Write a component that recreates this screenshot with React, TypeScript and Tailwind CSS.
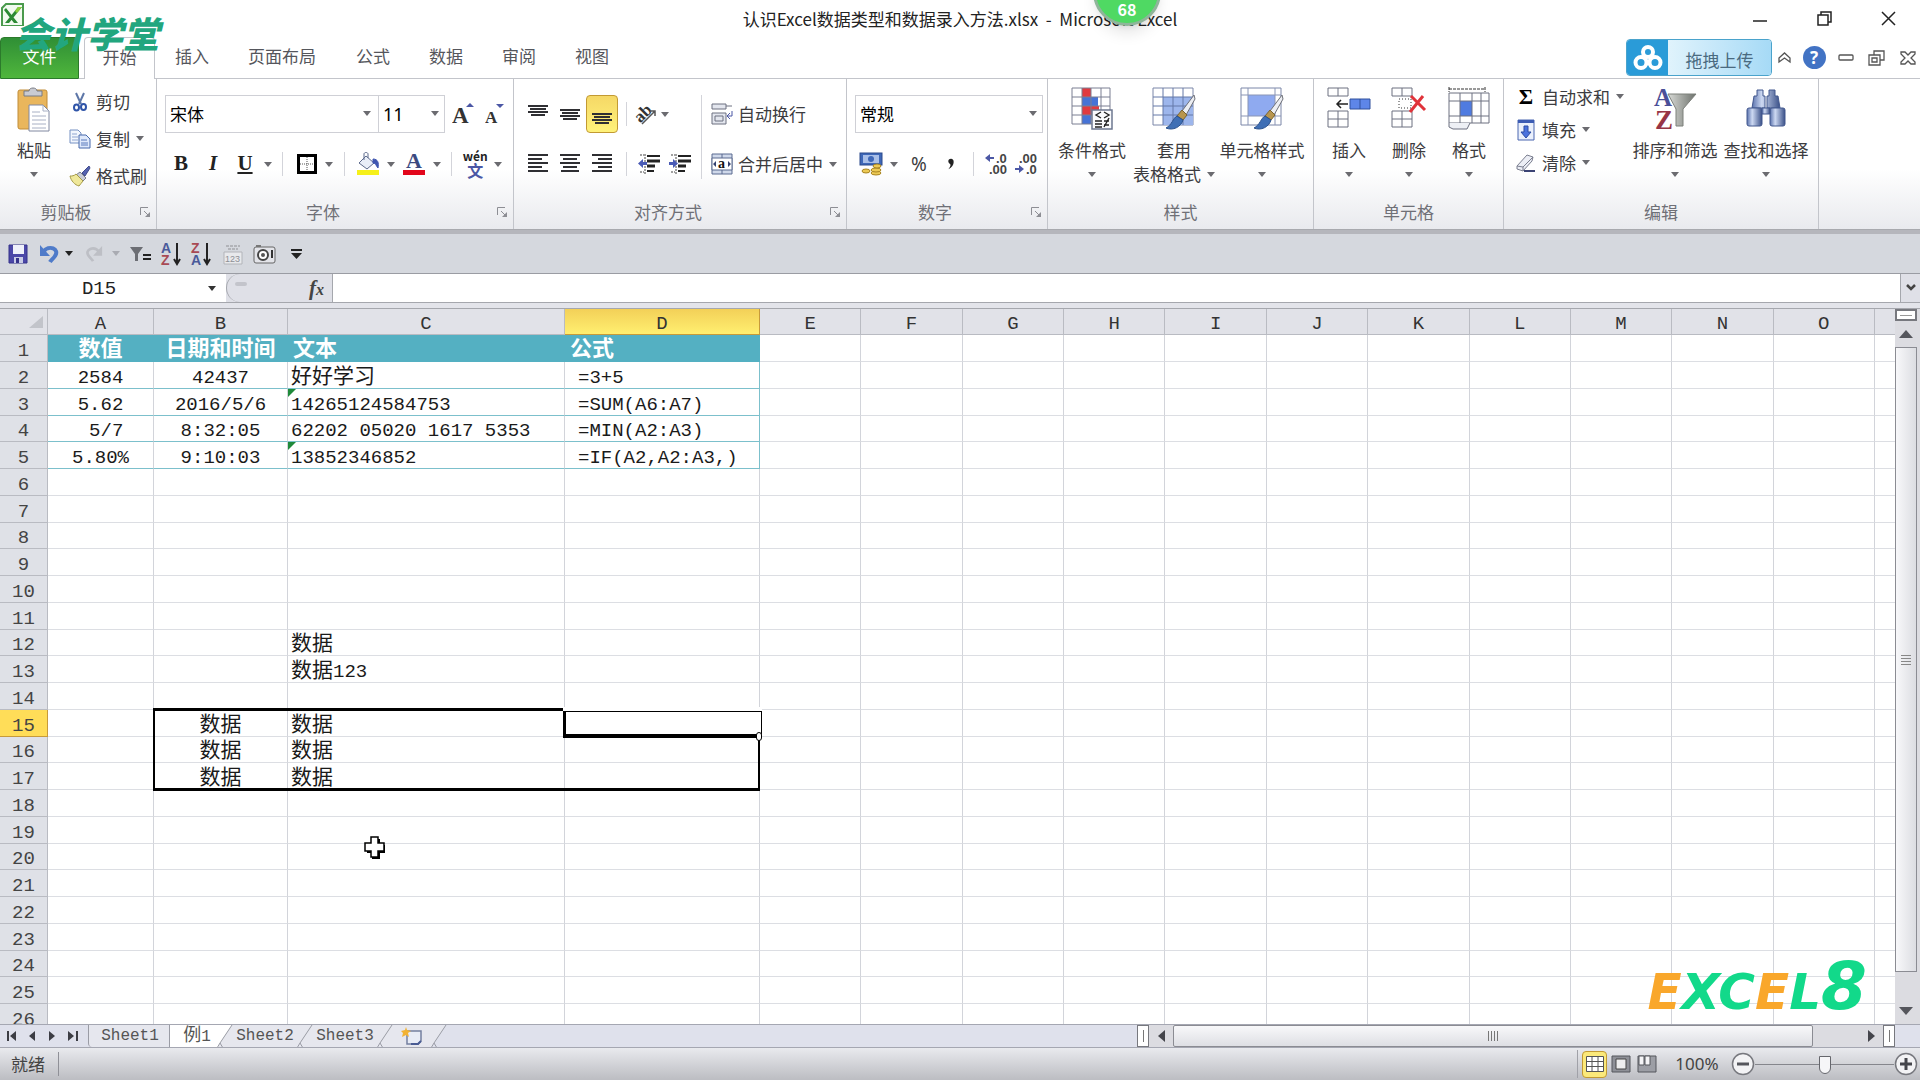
import React from "react";

const MONO = "font-['Liberation_Mono','Noto_Sans_CJK_SC',monospace]";

function Caret({ className = "text-[#6b6b70]" }: { className?: string }) {
  return (
    <svg width="8" height="5" viewBox="0 0 8 5" className={`shrink-0 ${className}`} aria-hidden="true">
      <path d="M0 0h8L4 5z" fill="currentColor" />
    </svg>
  );
}

function CaretBtn({ label }: { label: string }) {
  return (
    <button aria-label={label} className="flex h-full w-[14px] items-center justify-center">
      <Caret />
    </button>
  );
}

function Sep() {
  return (
    <span className="flex h-6 w-4 justify-center">
      <span className="h-full w-px bg-[#d3d4da]" />
    </span>
  );
}

function IconBtn({ label, className = "w-8", children }: { label: string; className?: string; children: React.ReactNode }) {
  return (
    <button aria-label={label} title={label} className={`flex h-full shrink-0 items-center justify-center ${className}`}>
      {children}
    </button>
  );
}

function RowBtn({ icon, text, caret, className }: { icon: React.ReactNode; text: string; caret?: boolean; className: string }) {
  return (
    <button className={`flex items-center whitespace-nowrap ${className}`}>
      <span className="flex w-6 shrink-0 justify-center">{icon}</span>
      <span>{text}</span>
      {caret && <Caret className="ml-0.5 text-[#6b6b70]" />}
    </button>
  );
}

function BigBtn({ icon, text, line2, className }: { icon: React.ReactNode; text: string; line2?: string; className: string }) {
  return (
    <button className={`flex shrink-0 flex-col items-center whitespace-nowrap pt-2 leading-6 ${className}`}>
      <span className="flex h-11 items-center">{icon}</span>
      <span className="mt-[7px]">{text}</span>
      <span className="flex h-6 items-center gap-1.5">
        {line2 && <span>{line2}</span>}
        <Caret />
      </span>
    </button>
  );
}

function Group({ name, launcher, className, children }: { name: string; launcher?: boolean; className: string; children: React.ReactNode }) {
  return (
    <section aria-label={name} className={`flex shrink-0 flex-col border-r border-[#c3c5cb] ${className}`}>
      <div className="h-[119px]">{children}</div>
      <div className="flex h-7 items-center text-[#6f7077]">
        <span className="flex-1 text-center">{name}</span>
        {launcher && (
          <button aria-label={`${name}设置`} className="flex w-6 justify-end pr-[5px]">
            <svg width="11" height="11" viewBox="0 0 11 11" fill="none" stroke="#8d8e94">
              <path d="M.5 8V.5H8M4 4l4 4" />
              <path d="M10 5v5H5z" fill="#8d8e94" stroke="none" />
            </svg>
          </button>
        )}
      </div>
    </section>
  );
}

function Lines({ rows }: { rows: [number, number, number][] }) {
  return (
    <svg width="20" height="20" viewBox="0 0 20 20" aria-hidden="true">
      {rows.map(([x, y, w]) => (
        <rect key={y} x={x} y={y} width={w} height="2" fill="#2f2f33" />
      ))}
    </svg>
  );
}

function Indent({ right }: { right?: boolean }) {
  return (
    <svg width="22" height="20" viewBox="0 0 22 20" aria-hidden="true">
      <path d="M2 1h4M2 18h4M7 0v20" stroke="#444" strokeDasharray="2 1" />
      <path d="M9 2h13M9 17h7" stroke="#222" strokeWidth="2" />
      <path d="M9 7h13M9 12h8" stroke="#222" strokeWidth="3" />
      <path d={right ? "M0 8h4V5l5 4.500-5 4.500v-3H0z" : "M9 8H5V5L0 9.500 5 14v-3h4z"} fill="#4a5bb5" />
    </svg>
  );
}

function Grid({ brush }: { brush?: "full" | "cell" }) {
  return (
    <svg width="44" height="44" viewBox="0 0 44 44" aria-hidden="true">
      <path d="M1 1h40v37H1z" fill="#fff" stroke="#7a86a8" />
      {brush === "full" ? (
        <>
          <path d="M11 10h30v28H11z" fill="#9db6ec" />
          <path d="M11 1v37M21 1v37M31 1v37M1 10h40M1 19h40M1 28h40" stroke="#6478a8" />
        </>
      ) : (
        <>
          <path d="M8 8h27v21H8z" fill="#8faaf0" />
          <path d="M8 1v37M35 1v37M1 8h40M1 29h40" stroke="#8a95b5" />
        </>
      )}
      <path d="M42 8 30 24l4 4 9-16z" fill="#eceef3" stroke="#6e7078" />
      <path d="m30 23-5 6 6 4 4-5z" fill="#b8964e" stroke="#7a6430" />
      <path d="M25 29c-4 2-5 9-11 12 7 3 15-1 17-8z" fill="#3f6fb5" stroke="#29508c" />
    </svg>
  );
}

const CondIcon = (
  <svg width="44" height="44" viewBox="0 0 44 44" aria-hidden="true">
    <path d="M2 1h38v36H2z" fill="#fff" />
    <path d="M12 1h9v9h-9z" fill="#e03a40" />
    <path d="M12 10h16v9H12z" fill="#4673d6" />
    <path d="M12 19h17v9H12z" fill="#e03a40" />
    <path d="M12 28h9v9h-9z" fill="#4673d6" />
    <path d="M2 1h38v36H2zM12 1v36M21 1v36M31 1v36M2 10h38M2 19h38M2 28h38" fill="none" stroke="#7a7f92" />
    <path d="M22 23h20v19H22z" fill="#fafbfd" stroke="#6e7890" strokeWidth="1.500" />
    <path d="m31 25-5 3 5 3M25 34h7M25 37h7M25 40h7M34 25l5 3-5 3M34 34h5M34 38h5M39 31l-5 9" fill="none" stroke="#222" strokeWidth="1.400" />
  </svg>
);

const InsertIcon = (
  <svg width="44" height="44" viewBox="0 0 44 44" fill="none" stroke="#6d7080" aria-hidden="true">
    <path d="M1 1h20v8H1zM11 1v8M1 24h20v16H1zM11 24v16M1 32h20" fill="#fff" />
    <path d="M10 17h11M14 13l-4 4 4 4" stroke="#222" strokeWidth="1.500" />
    <path d="M23 12h20v10H23zM33 12v10" fill="#5e86e8" stroke="#31509c" />
  </svg>
);

const DeleteIcon = (
  <svg width="44" height="44" viewBox="0 0 44 44" fill="none" stroke="#6d7080" aria-hidden="true">
    <path d="M5 1h20v8H5zM15 1v8M5 24h20v16H5zM15 24v16M5 32h20" fill="#fff" />
    <path d="M12 12h12v9H12z" stroke="#333" strokeDasharray="1 2" />
    <path d="m24 9 14 14M36 9 23 25" stroke="#e0333a" strokeWidth="3" />
  </svg>
);

const FormatIcon = (
  <svg width="44" height="44" viewBox="0 0 44 44" fill="none" stroke="#6d7080" aria-hidden="true">
    <path d="M2 0v5M38 0v5M2 2h36" stroke="#333" strokeDasharray="3 1" />
    <path d="M2 6h40v30H2z" fill="#fff" />
    <path d="M13 14h12v15H13z" fill="#4f7be0" stroke="none" />
    <path d="M13 6v30M25 6v30M34 6v30M2 14h40M2 29h40" />
    <path d="M2 36v4l4 2h14l3-6" fill="#eef0f5" />
  </svg>
);

const SortIcon = (
  <svg width="44" height="44" viewBox="0 0 44 44" aria-hidden="true">
    <defs>
      <linearGradient id="fun" x1="0" x2="1">
        <stop offset="0" stopColor="#d8dad6" />
        <stop offset="1" stopColor="#6d716c" />
      </linearGradient>
    </defs>
    <path d="M15 7h28L30 22v17h-7V22z" fill="url(#fun)" stroke="#7d807b" />
    <text x="1" y="19" fontSize="25" fontWeight="700" fontFamily="Liberation Serif" fill="#4a4f98">A</text>
    <text x="2" y="42" fontSize="27" fontWeight="700" fontFamily="Liberation Serif" fill="#973546">Z</text>
  </svg>
);

const FindIcon = (
  <svg width="42" height="42" viewBox="0 0 42 42" aria-hidden="true">
    <defs>
      <linearGradient id="bino" x1="0" x2="1">
        <stop offset="0" stopColor="#5a72ad" />
        <stop offset=".35" stopColor="#cdd9f2" />
        <stop offset="1" stopColor="#3a5088" />
      </linearGradient>
    </defs>
    <g fill="url(#bino)" stroke="#43588e">
      <path d="M12 2h6v6h2v12H7l2-12h3zM24 2h6v6h3l2 12H22V8h2z" />
      <rect x="2" y="20" width="15" height="18" rx="2" />
      <rect x="25" y="20" width="15" height="18" rx="2" />
      <path d="M17 20h8v6h-8z" />
    </g>
  </svg>
);

const PasteIcon = (
  <svg width="36" height="46" viewBox="0 0 34 46" aria-hidden="true">
    <rect x="1" y="3" width="29" height="39" rx="2" fill="#e9b65c" stroke="#c08c38" />
    <path d="M7 7V4h5c0-4 8-4 8 0h5v5H7z" fill="#c9cbd2" stroke="#777a84" />
    <path d="M12 18h14l6 6v20H12z" fill="#fff" stroke="#8088a0" />
    <path d="M26 18v6h6M15 25h8M15 29h14M15 33h14M15 37h14M15 41h14" fill="none" stroke="#a8b0c4" />
  </svg>
);

const CutIcon = (
  <svg width="16" height="20" viewBox="0 0 16 20" fill="none" aria-hidden="true">
    <path d="m4 1 5 11M12 1 7 12" stroke="#5e77a8" strokeWidth="2" />
    <ellipse cx="4.500" cy="15.500" rx="2.500" ry="3" stroke="#2f54a8" strokeWidth="2" />
    <ellipse cx="11.500" cy="15" rx="2.500" ry="3" stroke="#2f54a8" strokeWidth="2" />
  </svg>
);

const CopyIcon = (
  <svg width="22" height="20" viewBox="0 0 22 20" aria-hidden="true">
    <path d="M1 1h8l3 3v10H1z" fill="#f2f6fd" stroke="#7590c2" />
    <path d="M3 5h5M3 8h6M3 11h6" stroke="#8fa5d0" />
    <path d="M10 6h7l4 4v9H10z" fill="#dfe9fb" stroke="#4668ab" />
    <path d="M12 11h6M12 14h7M12 16h7" stroke="#5a7abc" />
  </svg>
);

const BrushIcon = (
  <svg width="22" height="22" viewBox="0 0 22 22" aria-hidden="true">
    <path d="m20 1-7 7 3 3 5-8z" fill="#5563b0" stroke="#3f4a8c" />
    <path d="m11 7 6 6-3 3-7-6z" fill="#c9ccd6" stroke="#7a7e8c" />
    <path d="M7 9c-2 2-4 2-6 2 1 5 5 9 9 10 1-2 3-3 4-5z" fill="#efe89a" stroke="#a59a48" />
  </svg>
);

const FillIcon = (
  <svg width="18" height="22" viewBox="0 0 18 22" aria-hidden="true">
    <path d="M1 1h16v20H1z" fill="#eaf0fc" stroke="#4a67b0" />
    <path d="M1 1h16v3H1z" fill="#3c5cb4" />
    <path d="M7 7h4v6h3l-5 6-5-6h3z" fill="#4a72dd" stroke="#2b4ba4" />
  </svg>
);

const EraseIcon = (
  <svg width="20" height="18" viewBox="0 0 20 18" aria-hidden="true">
    <path d="M1 12 11 1l6 2-1 4-9 10-6-2z" fill="#eceef5" stroke="#7b7f90" />
    <path d="m1 12 6 1 10-10M7 13v4" fill="none" stroke="#7b7f90" />
    <path d="M8 17h11" stroke="#3b4374" strokeWidth="2" />
  </svg>
);

function SortLetters({ a, b, ca, cb }: { a: string; b: string; ca: string; cb: string }) {
  return (
    <svg width="22" height="24" viewBox="0 0 22 24" aria-hidden="true">
      <text x="1" y="11" fontSize="14" fontWeight="700" fontFamily="Liberation Sans" fill={ca}>{a}</text>
      <text x="1" y="23" fontSize="14" fontWeight="700" fontFamily="Liberation Sans" fill={cb}>{b}</text>
      <path d="M17 1v20M14 17l3 5 3-5" fill="none" stroke="#222" strokeWidth="2" />
    </svg>
  );
}

function Ribbon() {
  return (
    <div className="flex h-[151px] shrink-0 overflow-hidden border-b border-[#a8a9ae] bg-linear-to-b from-white from-60% to-[#e9eaee] text-[17px] text-[#3c3c40]">
      <Group name="剪贴板" launcher className="w-[157px]">
        <div className="flex">
          <button className="flex w-[68px] flex-col items-center pt-2 leading-6">
            <span className="h-11">{PasteIcon}</span>
            <span className="mt-[7px]">粘贴</span>
            <span className="flex h-6 items-center"><Caret /></span>
          </button>
          <div className="flex flex-col pt-1">
            <RowBtn className="h-[37px] gap-1" icon={CutIcon} text="剪切" />
            <RowBtn className="h-[37px] gap-1" icon={CopyIcon} text="复制" caret />
            <RowBtn className="h-[37px] gap-1" icon={BrushIcon} text="格式刷" />
          </div>
        </div>
      </Group>

      <Group name="字体" launcher className="w-[357px]">
        <div className="px-2 pt-4">
          <div className="flex h-[38px] items-center">
            <div className="relative h-full">
              <select aria-label="字体" className="h-full w-[214px] appearance-none border border-[#cfd0d6] bg-white pl-1 text-black">
                <option>宋体</option>
              </select>
              <Caret className="pointer-events-none absolute right-2 top-4 text-[#6b6b70]" />
            </div>
            <div className="relative h-full">
              <select aria-label="字号" className="h-full w-[66px] appearance-none border border-l-0 border-[#cfd0d6] bg-white pl-1 font-['Noto_Sans',sans-serif] text-[18px] text-black">
                <option>11</option>
              </select>
              <Caret className="pointer-events-none absolute right-1.5 top-4 text-[#6b6b70]" />
            </div>
            <IconBtn label="增大字号" className="w-9">
              <svg width="22" height="24" viewBox="0 0 22 24">
                <text x="0" y="21" fontSize="23" fontWeight="700" fontFamily="Liberation Serif" fill="#333">A</text>
                <path d="M14 5h8l-4-4z" fill="#4b57a5" />
              </svg>
            </IconBtn>
            <IconBtn label="减小字号" className="w-7">
              <svg width="20" height="24" viewBox="0 0 20 24">
                <text x="0" y="21" fontSize="17" fontWeight="700" fontFamily="Liberation Serif" fill="#333">A</text>
                <path d="M11 2h8l-4 4z" fill="#4b57a5" />
              </svg>
            </IconBtn>
          </div>
          <div className="mt-4 flex h-[30px] items-center font-['Liberation_Serif',serif] text-[21px] font-bold text-[#222]">
            <IconBtn label="加粗">B</IconBtn>
            <IconBtn label="倾斜"><i>I</i></IconBtn>
            <IconBtn label="下划线"><u>U</u></IconBtn>
            <CaretBtn label="下划线选项" />
            <Sep />
            <IconBtn label="边框">
              <svg width="20" height="20" viewBox="0 0 20 20" fill="none">
                <path d="M1.500 1.500h17v17h-17z" stroke="#000" strokeWidth="3" />
                <path d="M10 3v14M3 10h14" stroke="#555" strokeDasharray="1 1" />
              </svg>
            </IconBtn>
            <CaretBtn label="边框选项" />
            <Sep />
            <IconBtn label="填充颜色">
              <svg width="24" height="24" viewBox="0 0 24 24">
                <path d="m10 4 8 7-7 6-8-6z" fill="#e9eef8" stroke="#5d6a8c" />
                <path d="M8 8V2c0-2 4-2 4 0v4" fill="none" stroke="#5d6a8c" />
                <path d="M17 7c5 0 6 4 5 9-2-2-2-5-5-5z" fill="#4056b0" stroke="#4056b0" />
                <path d="M1 18h22v5H1z" fill="#f6f01a" />
              </svg>
            </IconBtn>
            <CaretBtn label="填充颜色选项" />
            <IconBtn label="字体颜色">
              <svg width="24" height="24" viewBox="0 0 24 24">
                <text x="4" y="16" fontSize="22" fontWeight="700" fontFamily="Liberation Serif" fill="#3b4a80">A</text>
                <path d="M1 18h22v5H1z" fill="#e2061b" />
              </svg>
            </IconBtn>
            <CaretBtn label="字体颜色选项" />
            <Sep />
            <IconBtn label="拼音">
              <span className="flex flex-col items-center font-['Noto_Sans_CJK_SC',sans-serif] leading-3">
                <span className="text-[12px]">wén</span>
                <span className="text-[16px] leading-4 text-[#4b57a5]">文</span>
              </span>
            </IconBtn>
            <CaretBtn label="拼音选项" />
          </div>
        </div>
      </Group>

      <Group name="对齐方式" launcher className="w-[333px]">
        <div className="flex pl-2 pt-4">
          <div className="w-[180px] border-r border-[#d3d4da]">
            <div className="flex h-[38px] items-center">
              <IconBtn label="顶端对齐"><Lines rows={[[0, 1, 20], [2, 4, 16], [0, 7, 20], [3, 10, 14]]} /></IconBtn>
              <IconBtn label="垂直居中"><Lines rows={[[0, 5, 20], [2, 8, 16], [0, 11, 20], [3, 14, 14]]} /></IconBtn>
              <IconBtn label="底端对齐" className="w-8 rounded-sm border border-[#c29a33] bg-linear-to-b from-[#f5d866] to-[#fff27a]">
                <Lines rows={[[0, 9, 20], [2, 12, 16], [0, 15, 20], [3, 18, 14]]} />
              </IconBtn>
              <Sep />
              <IconBtn label="方向" className="w-6">
                <svg width="24" height="24" viewBox="0 0 24 24">
                  <text x="1" y="17" fontSize="17" fontWeight="700" fontFamily="Liberation Serif" fill="#333" transform="rotate(-45 9 13)">ab</text>
                  <path d="M8 22 21 9M21 14V9h-5" fill="none" stroke="#555" strokeWidth="1.500" />
                </svg>
              </IconBtn>
              <CaretBtn label="方向选项" />
            </div>
            <div className="mt-4 flex h-[30px] items-center">
              <IconBtn label="左对齐"><Lines rows={[[0, 0, 20], [0, 4, 14], [0, 8, 20], [0, 12, 14], [0, 16, 20]]} /></IconBtn>
              <IconBtn label="居中"><Lines rows={[[0, 0, 20], [3, 4, 14], [0, 8, 20], [3, 12, 14], [1, 16, 18]]} /></IconBtn>
              <IconBtn label="右对齐"><Lines rows={[[0, 0, 20], [6, 4, 14], [0, 8, 20], [6, 12, 14], [0, 16, 20]]} /></IconBtn>
              <Sep />
              <IconBtn label="减少缩进量" className="w-[30px]"><Indent /></IconBtn>
              <IconBtn label="增加缩进量"><Indent right /></IconBtn>
            </div>
          </div>
          <div className="pl-2">
            <RowBtn
              className="h-[38px] gap-1"
              text="自动换行"
              icon={
                <svg width="22" height="22" viewBox="0 0 22 22" fill="none" stroke="#6c7080">
                  <path d="M1 1h14v5H1zM1 10h14v11H1z" fill="#e3e6ee" />
                  <path d="M15 3h6M4 13h8v5H4z" />
                  <path d="M21 8v5h-4M19 10l-3 3 3 3" stroke="#4b57a5" />
                </svg>
              }
            />
            <RowBtn
              className="mt-4 h-[30px] gap-1"
              text="合并后居中"
              caret
              icon={
                <svg width="22" height="22" viewBox="0 0 22 22">
                  <path d="M1 1h20v20H1z" fill="#cfd8ea" stroke="#5a6a90" />
                  <path d="M1 5h20v12H1z" fill="#fff" stroke="#5a6a90" />
                  <path d="M11 1v4M11 17v4" stroke="#5a6a90" />
                  <text x="7" y="15" fontSize="14" fontWeight="700" fontFamily="Liberation Serif" fill="#111">a</text>
                  <path d="M2 11l3-3v6zM20 11l-3-3v6z" fill="#33406e" />
                </svg>
              }
            />
          </div>
        </div>
      </Group>

      <Group name="数字" launcher className="w-[201px]">
        <div className="pl-2 pt-4">
          <div className="relative h-[38px] w-[188px]">
            <select aria-label="数字格式" className="h-full w-full appearance-none border border-[#cfd0d6] bg-white pl-1 text-black">
              <option>常规</option>
            </select>
            <Caret className="pointer-events-none absolute right-1.5 top-4 text-[#6b6b70]" />
          </div>
          <div className="mt-4 flex h-[30px] items-center">
            <IconBtn label="会计数字格式">
              <svg width="24" height="24" viewBox="0 0 24 24">
                <rect x="1" y="1" width="22" height="12" fill="#3f68b8" stroke="#2c4a8c" />
                <rect x="4" y="3" width="16" height="8" fill="#a9bfe8" />
                <circle cx="12" cy="7" r="3" fill="#3f68b8" />
                <g fill="#ecc955" stroke="#a88422">
                  <ellipse cx="17" cy="21" rx="5" ry="2" />
                  <ellipse cx="17" cy="18" rx="5" ry="2" />
                  <ellipse cx="18" cy="14" rx="4" ry="2" />
                  <ellipse cx="7" cy="19" rx="4" ry="2" />
                </g>
              </svg>
            </IconBtn>
            <CaretBtn label="会计格式选项" />
            <IconBtn label="百分比样式" className="w-9 font-['Noto_Sans',sans-serif] text-[19px]">%</IconBtn>
            <IconBtn label="千位分隔样式" className="w-7">
              <svg width="8" height="12" viewBox="0 0 8 14"><path d="M4 1c5 0 4 9-3 12 2-3 3-4 2-6C0 6 0 1 4 1z" fill="#222" /></svg>
            </IconBtn>
            <Sep />
            <IconBtn label="增加小数位数" className="w-[30px]">
              <svg width="24" height="24" viewBox="0 0 24 24" fontFamily="Liberation Sans" fontSize="13" fontWeight="700" fill="#444">
                <text x="12" y="11">.0</text><text x="5" y="22">.00</text>
                <path d="M10 5H6V2L1 6l5 4V7h4z" fill="#4b57a5" />
              </svg>
            </IconBtn>
            <IconBtn label="减少小数位数" className="w-[30px]">
              <svg width="24" height="24" viewBox="0 0 24 24" fontFamily="Liberation Sans" fontSize="13" fontWeight="700" fill="#444">
                <text x="5" y="11">.00</text><text x="12" y="22">.0</text>
                <path d="M1 16h4v-3l5 4-5 4v-3H1z" fill="#4b57a5" />
              </svg>
            </IconBtn>
          </div>
        </div>
      </Group>

      <Group name="样式" className="w-[266px]">
        <div className="flex">
          <BigBtn className="w-[88px]" icon={CondIcon} text="条件格式" />
          <BigBtn className="w-[76px]" icon={<Grid brush="full" />} text="套用" line2="表格格式" />
          <BigBtn className="w-[100px]" icon={<Grid brush="cell" />} text="单元格样式" />
        </div>
      </Group>

      <Group name="单元格" className="w-[190px]">
        <div className="flex pl-[5px]">
          <BigBtn className="w-[60px]" icon={InsertIcon} text="插入" />
          <BigBtn className="w-[60px]" icon={DeleteIcon} text="删除" />
          <BigBtn className="w-[60px]" icon={FormatIcon} text="格式" />
        </div>
      </Group>

      <Group name="编辑" className="w-[315px]">
        <div className="flex">
          <div className="flex w-[126px] flex-col pl-2.5 pt-px">
            <RowBtn className="h-[33px] gap-1" icon={<span className="font-['Liberation_Serif',serif] text-[22px] font-bold leading-6 text-black">Σ</span>} text="自动求和" caret />
            <RowBtn className="h-[33px] gap-1" icon={FillIcon} text="填充" caret />
            <RowBtn className="h-[33px] gap-1" icon={EraseIcon} text="清除" caret />
          </div>
          <BigBtn className="w-[90px]" icon={SortIcon} text="排序和筛选" />
          <BigBtn className="w-[92px]" icon={FindIcon} text="查找和选择" />
        </div>
      </Group>
    </div>
  );
}

function TitleBar() {
  return (
    <header className="grid h-[37px] shrink-0 grid-cols-[1fr_auto_1fr] items-center">
      <svg width="25" height="26" viewBox="0 0 25 26" className="self-start" aria-hidden="true">
        <path d="M2 8 6 4h17v22H2z" fill="#f2faf0" stroke="#4a9a4d" strokeWidth="2" />
        <path d="m6 8 12 15h-4L4 10zM18 7h4L9 23H5z" fill="#2c8a34" />
        <path d="M18 7h4l-5 6-2-2z" fill="#8ccf3e" />
      </svg>
      <h1 className="whitespace-pre text-[17px] text-[#222]">认识Excel数据类型和数据录入方法.xlsx  -  Microsoft Excel</h1>
      <div className="flex justify-end text-[#222]">
        <button aria-label="最小化" className="flex h-9 w-16 items-center justify-center">
          <svg width="14" height="14" viewBox="0 0 14 14"><path d="M0 9h14" stroke="currentColor" strokeWidth="1.500" /></svg>
        </button>
        <button aria-label="还原" className="flex h-9 w-16 items-center justify-center">
          <svg width="15" height="15" viewBox="0 0 15 15" fill="none" stroke="currentColor" strokeWidth="1.500"><path d="M1 4h10v10H1zM4 4V1h10v10h-3" /></svg>
        </button>
        <button aria-label="关闭" className="flex h-9 w-16 items-center justify-center">
          <svg width="15" height="15" viewBox="0 0 15 15" stroke="currentColor" strokeWidth="1.500"><path d="m1 1 13 13M14 1 1 14" /></svg>
        </button>
      </div>
    </header>
  );
}

function TabBar() {
  return (
    <nav className="flex h-[42px] shrink-0 items-end text-[17px] text-[#55565c]">
      <button className="h-full w-[79px] rounded-t-sm border border-[#2b7a2b] bg-linear-to-b from-[#2f8f35] to-[#4fb63c] pb-1 text-white">文件</button>
      <span className="h-full w-[5px] border-b border-[#c3c5cb]" />
      <button className="h-full w-[71px] rounded-t border border-b-0 border-[#c3c5cb] bg-white pb-1">开始</button>
      <div className="flex h-full flex-1 items-center border-b border-[#c3c5cb]">
        <div className="flex pb-[3px]">
          <button className="w-[74px]">插入</button>
          <button className="w-[106px]">页面布局</button>
          <button className="w-[76px]">公式</button>
          <button className="w-[70px]">数据</button>
          <button className="w-[76px]">审阅</button>
          <button className="w-[70px]">视图</button>
        </div>
        <div className="ml-auto flex h-full items-center">
          <button className="flex h-[37px] w-[146px] overflow-hidden rounded border border-[#4aa3cc]">
            <span className="flex h-full w-[41px] items-center justify-center bg-[#2a9bd8]">
              <svg width="30" height="26" viewBox="0 0 30 26" fill="none" stroke="#fff" strokeWidth="4" aria-hidden="true">
                <circle cx="15" cy="7" r="5" />
                <circle cx="8" cy="17.500" r="5.500" />
                <circle cx="22" cy="17.500" r="5.500" />
              </svg>
            </span>
            <span className="flex h-full flex-1 items-center justify-center bg-linear-to-r from-[#e0f3fc] to-[#a6daf6] pt-1 text-[#4a6a80]">拖拽上传</span>
          </button>
          <button aria-label="折叠功能区" className="flex w-6 justify-center">
            <svg width="13" height="12" viewBox="0 0 13 12" fill="none" stroke="#555" strokeWidth="1.300"><path d="m1 6 5.500-5L12 6v4L6.500 6 1 10z" /></svg>
          </button>
          <button aria-label="帮助" className="flex w-9 justify-center">
            <span className="flex h-[23px] w-[23px] items-center justify-center rounded-full bg-[#4273c4] font-['Noto_Sans',sans-serif] text-[17px] font-bold leading-none text-white">?</span>
          </button>
          <button aria-label="最小化工作簿" className="flex w-7 justify-center">
            <svg width="16" height="8" viewBox="0 0 16 8" fill="none" stroke="#555" strokeWidth="1.300"><rect x="1" y="1" width="14" height="5" rx="1" /></svg>
          </button>
          <button aria-label="还原工作簿" className="flex w-8 justify-center">
            <svg width="17" height="16" viewBox="0 0 17 16" fill="none" stroke="#555" strokeWidth="1.300"><path d="M6 5V1h10v9h-4M1 5h11v10H1zM4 8h5v4H4z" /></svg>
          </button>
          <button aria-label="关闭工作簿" className="flex w-7 justify-end pr-1">
            <svg width="16" height="14" viewBox="0 0 16 14" fill="none" stroke="#555" strokeWidth="1.300"><path d="M1 1h4l3 3 3-3h4v2l-4 4 4 4v2h-4l-3-3-3 3H1v-2l4-4-4-4z" /></svg>
          </button>
        </div>
      </div>
    </nav>
  );
}

function QuickAccess() {
  return (
    <div className="flex h-10 shrink-0 items-center border-b border-[#9a9ca3] bg-[#d5d8de] pl-[3px]">
      <IconBtn label="保存" className="w-[30px]">
        <svg width="20" height="20" viewBox="0 0 20 20"><path d="M1 1h18v18H1z" fill="#4b47a8" stroke="#35328a" /><path d="M5 1h11v9H5z" fill="#eef0fa" /><path d="M6 13h9v6H6z" fill="#c9cce6" /><path d="M8 14h3v5H8z" fill="#35328a" /></svg>
      </IconBtn>
      <IconBtn label="撤消" className="w-8">
        <svg width="20" height="20" viewBox="0 0 20 20"><path d="M4 8c6-8 17-3 12 4-2 3-4 4-5 6" fill="none" stroke="#4f7bc9" strokeWidth="4" /><path d="M1 1v11h10z" fill="#4f7bc9" /></svg>
      </IconBtn>
      <button aria-label="撤消列表" className="flex w-[17px] items-center"><Caret className="text-[#222]" /></button>
      <IconBtn label="恢复" className="w-6">
        <svg width="18" height="18" viewBox="0 0 20 20"><path d="M16 8C10 0-1 5 4 12c2 3 4 4 5 6" fill="none" stroke="#bdbfc5" strokeWidth="3" /><path d="M19 1v11H9z" fill="#bdbfc5" /></svg>
      </IconBtn>
      <button aria-label="恢复列表" className="flex w-5 items-center justify-center"><Caret className="text-[#a9abb2]" /></button>
      <IconBtn label="筛选" className="w-[30px]">
        <svg width="22" height="16" viewBox="0 0 22 16"><path d="M0 1h13L8 8v7H5V8z" fill="#6c6e74" /><path d="M13 8h8v2h-8zM13 12h8v2h-8z" fill="#222" /></svg>
      </IconBtn>
      <IconBtn label="升序" className="w-[30px]"><SortLetters a="A" b="Z" ca="#4a5a9a" cb="#a84a54" /></IconBtn>
      <IconBtn label="降序" className="w-[30px]"><SortLetters a="Z" b="A" ca="#a84a54" cb="#4a5a9a" /></IconBtn>
      <IconBtn label="数字格式" className="w-[34px]">
        <svg width="20" height="22" viewBox="0 0 20 22"><path d="M1 9h18v12H1z" fill="#e8e9ec" stroke="#b2b4b9" /><path d="M3 3h14M5 6h10" stroke="#b2b4b9" strokeWidth="2" strokeDasharray="3 1" /><text x="2" y="19" fontSize="9" fontFamily="Liberation Sans" fill="#8d8f95">123</text></svg>
      </IconBtn>
      <IconBtn label="照相机" className="w-[28px]">
        <svg width="23" height="20" viewBox="0 0 23 20"><rect x="1" y="3" width="21" height="16" rx="2" fill="#e3e4e9" stroke="#666" /><path d="M3 1h5v2H3z" fill="#777" /><path d="M18 6h2v8h-2z" fill="#333" /><circle cx="10" cy="11" r="5" fill="#fff" stroke="#444" strokeWidth="2" /><circle cx="10" cy="11" r="2" fill="#555" /></svg>
      </IconBtn>
      <IconBtn label="自定义快速访问工具栏" className="w-9">
        <svg width="11" height="10" viewBox="0 0 11 10"><path d="M0 0h11v2H0zM0 4h11L5.500 10z" fill="#222" /></svg>
      </IconBtn>
    </div>
  );
}

function FormulaBar() {
  return (
    <div className="flex h-[29px] shrink-0 border-b border-[#a5a7ad] bg-[#dfe0e7]">
      <div className="relative w-[226px] bg-white">
        <input aria-label="名称框" defaultValue="D15" className={`h-full w-[198px] bg-transparent pt-0.5 text-center text-[19px] text-[#222] ${MONO}`} />
        <Caret className="pointer-events-none absolute right-2.5 top-3 text-[#333]" />
      </div>
      <div className="flex w-[107px] items-center justify-end rounded-l-full border-x border-[#a5a7ad] pr-2">
        <span className="mb-2 ml-2 mr-auto h-1 w-3 rounded bg-[#c3c4cb]" />
        <button aria-label="插入函数" className="font-['Liberation_Serif',serif] text-[21px] font-bold italic leading-none text-[#444]">
          f<span className="text-[16px]">x</span>
        </button>
      </div>
      <input aria-label="编辑栏" className={`min-w-0 flex-1 bg-white px-2 text-[19px] ${MONO}`} />
      <button aria-label="展开编辑栏" className="flex w-5 items-center justify-center border-l border-[#a5a7ad]">
        <svg width="10" height="8" viewBox="0 0 10 8" fill="none" stroke="#444" strokeWidth="2.500"><path d="m1 1 4 4 4-4" /></svg>
      </button>
    </div>
  );
}

const COLS = ["A", "B", "C", "D", "E", "F", "G", "H", "I", "J", "K", "L", "M", "N", "O"];
const DATA: Record<number, string[]> = {
  1: ["数值", "日期和时间", "文本", "公式"],
  2: ["2584", "42437", "好好学习", "=3+5"],
  3: ["5.62", "2016/5/6", "14265124584753", "=SUM(A6:A7)"],
  4: [" 5/7", "8:32:05", "62202 05020 1617 5353", "=MIN(A2:A3)"],
  5: ["5.80%", "9:10:03", "13852346852", "=IF(A2,A2:A3,)"],
  12: ["", "", "数据", ""],
  13: ["", "", "数据123", ""],
  15: ["", "数据", "数据", ""],
  16: ["", "数据", "数据", ""],
  17: ["", "数据", "数据", ""],
};
const ALIGN = ["text-center", "text-center", "pl-[3px]", "pl-[13px]"];

function cellClass(row: number, col: number) {
  if (row === 1 && col < 4) return "border-[#54b0c2] bg-[#54b0c2] text-white font-bold";
  if (row <= 5 && col === 3) return "border-[#7cc0cc]";
  if (row <= 5 && col < 3) return "border-b-[#7cc0cc] border-r-[#d2d4da]";
  return "border-b-[#dcdee3] border-r-[#d2d4da]";
}

function CellText({ text, bold }: { text: string; bold: boolean }) {
  const parts = text.match(/[\u4e00-\u9fff]+|[^\u4e00-\u9fff]+/g) ?? [];
  return (
    <>
      {parts.map((p, i) => (
        <span key={i} className={/[\u4e00-\u9fff]/.test(p) ? (bold ? "text-[22px]" : "text-[21px]") : "text-[19px]"}>{p}</span>
      ))}
    </>
  );
}

function Sheet() {
  return (
    <div className="relative min-w-0 flex-1 overflow-hidden border-t border-[#a5a7ad]">
      <table className={`w-full table-fixed border-separate border-spacing-0 text-[19px] leading-5 text-[#1a1a1a] ${MONO}`}>
        <colgroup>
          <col className="w-[48px]" />
          <col className="w-[106px]" />
          <col className="w-[134px]" />
          <col className="w-[277px]" />
          <col className="w-[195px]" />
          {COLS.slice(4).map((c) => <col key={c} />)}
          <col className="w-[20px]" />
        </colgroup>
        <thead>
          <tr className="h-[26px]">
            <th className="border-b border-r border-[#b9bbc2] bg-[#e1e2e8] p-0" aria-label="全选">
              <svg width="14" height="12" viewBox="0 0 14 12" className="ml-auto mr-1"><path d="M14 0v12H0z" fill="#c2c4ca" /></svg>
            </th>
            {COLS.map((c) => (
              <th
                key={c}
                scope="col"
                className={`border-b border-r p-0 pt-1 font-normal text-[#333] ${c === "D" ? "border-[#c79a3a] bg-linear-to-b from-[#f3d058] to-[#ffef70]" : "border-[#b9bbc2] bg-[#e1e2e8]"}`}
              >
                {c}
              </th>
            ))}
            <th className="border-b border-[#b9bbc2] bg-[#e1e2e8] p-0" />
          </tr>
        </thead>
        <tbody>
          {Array.from({ length: 26 }, (_, i) => {
            const row = i + 1;
            return (
              <tr key={row} className={i % 4 === 3 ? "h-[26px]" : "h-[27px]"}>
                <th
                  scope="row"
                  className={`border-b border-r p-0 pt-[5px] font-normal text-[#444] ${row === 15 ? "border-[#c79a3a] bg-[#ffdd58]" : "border-[#b9bbc2] bg-[#dfe1e7]"}`}
                >
                  {row}
                </th>
                {COLS.map((c, j) => {
                  const text = DATA[row]?.[j] ?? "";
                  return (
                    <td key={c} className={`relative whitespace-pre border-b border-r p-0 pt-[5px] ${row === 1 && j > 1 ? "pl-[5px]" : ALIGN[j] ?? ""} ${cellClass(row, j)}`}>
                      {c === "C" && (row === 3 || row === 5) && (
                        <svg width="8" height="8" viewBox="0 0 8 8" className="absolute left-0 top-0"><path d="M0 0h8L0 8z" fill="#1f8a3a" /></svg>
                      )}
                      <CellText text={text} bold={row === 1} />
                    </td>
                  );
                })}
                <td className="border-b border-[#dcdee3] p-0" />
              </tr>
            );
          })}
        </tbody>
      </table>

      <div className="pointer-events-none absolute left-[153px] top-[399px] h-[83px] w-[607px] border-x-2 border-y-3 border-black" />
      <div className="pointer-events-none absolute left-[563px] top-[398px] h-[31px] w-[199px] bg-white pt-1">
        <div className="h-full border-b-4 border-l-3 border-r border-t border-black" />
      </div>
      <span className="pointer-events-none absolute left-[756px] top-[423px] h-[9px] w-[6px] rounded-full border border-black bg-white" />

      <svg width="22" height="24" viewBox="0 0 22 24" className="pointer-events-none absolute left-[364px] top-[527px]" aria-hidden="true">
        <path d="M8 3h8v6h5v8h-5v6H8v-6H3V9h5z" fill="#000" />
        <path d="M7 1h7v6h6v8h-6v6H7v-6H1V7h6z" fill="#fff" stroke="#000" strokeWidth="1.500" />
      </svg>

      <p className="pointer-events-none absolute bottom-1 right-[28px] flex items-baseline font-['DejaVu_Sans',sans-serif] font-bold italic leading-none" aria-label="EXCEL8">
        <span className="text-[50px] text-[#f9a72b]">E</span>
        <span className="text-[50px] text-[#12d98a]">XC</span>
        <span className="text-[50px] text-[#f9a72b]">E</span>
        <span className="text-[50px] text-[#12d98a]">L</span>
        <span className="text-[66px] text-[#12d98a]">8</span>
      </p>
    </div>
  );
}

function VScroll() {
  return (
    <div className="flex w-[25px] shrink-0 flex-col items-start border-t border-[#a5a7ad] bg-[#dcdce1] pr-[3px]">
      <button aria-label="拆分窗口" className="flex h-3 w-full items-center justify-center border-2 border-[#77787e] bg-white"><span className="h-px w-3 bg-[#999]" /></button>
      <button aria-label="向上滚动" className="flex h-[26px] w-full items-center justify-center">
        <svg width="14" height="8" viewBox="0 0 14 8"><path d="M7 0l7 8H0z" fill="#55565c" /></svg>
      </button>
      <div className="flex w-full flex-1 flex-col">
        <div className="flex flex-1 flex-col items-center justify-center gap-0.5 border border-[#8b8c93] bg-linear-to-r from-[#f8f8fa] to-[#dcdde2]">
          <span className="h-px w-2.5 bg-[#888]" /><span className="h-px w-2.5 bg-[#888]" /><span className="h-px w-2.5 bg-[#888]" /><span className="h-px w-2.5 bg-[#888]" />
        </div>
        <div className="h-[26px]" />
      </div>
      <button aria-label="向下滚动" className="flex h-[26px] w-full items-center justify-center">
        <svg width="14" height="8" viewBox="0 0 14 8"><path d="M0 0h14L7 8z" fill="#55565c" /></svg>
      </button>
    </div>
  );
}

function Slant({ left, right }: { left: string; right: string }) {
  return (
    <svg width="18" height="24" viewBox="0 0 18 24" className="shrink-0" aria-hidden="true">
      <path d="M0 0h16L3 22l-3 2z" fill={left} />
      <path d="M16 0h2v24H5l-3-3z" fill={right} />
      <path d="M16 0 4 18M1 23l3-5 3 5" fill="none" stroke="#9a9ca5" />
    </svg>
  );
}

function SheetTabs() {
  const nav = [
    ["第一张", "M1 0h2v10H1zM10 0v10L4 5z", "w-[22px]"],
    ["上一张", "M8 0v10L2 5z", "w-5"],
    ["下一张", "M2 0v10l6-5z", "w-5"],
    ["最后一张", "M0 0v10l6-5zM8 0h2v10H8z", "w-[23px]"],
  ];
  return (
    <div className="flex h-6 shrink-0 border-y border-[#a5a7b2] bg-[#dfe1ec]">
      <div className="flex pr-[3px]">
        {nav.map(([label, d, w]) => (
          <button key={label} aria-label={label} className={`flex items-center justify-center ${w}`}>
            <svg width="11" height="10" viewBox="0 0 11 10"><path d={d} fill="#3c3d44" /></svg>
          </button>
        ))}
      </div>
      <div className={`flex items-stretch overflow-hidden text-[16px] leading-[22px] text-[#555] ${MONO}`}>
        <button className="w-[82px] rounded-bl border-x border-[#9a9ca5] bg-[#e6e7ee] pl-0.5">Sheet1</button>
        <button className="w-[46px] bg-white pl-2"><span className="text-[18px]">例</span>1</button>
        <Slant left="#ffffff" right="#e6e7ee" />
        <button className="w-[62px] bg-[#e6e7ee]">Sheet2</button>
        <Slant left="#e6e7ee" right="#e6e7ee" />
        <button className="w-[62px] bg-[#e6e7ee]">Sheet3</button>
        <Slant left="#e6e7ee" right="#e6e7ee" />
        <button aria-label="插入工作表" className="flex w-[36px] items-center justify-center bg-[#e6e7ee]">
          <svg width="22" height="18" viewBox="0 0 22 18"><path d="M6 4h14v10l-3 3H6z" fill="#e8ecf6" stroke="#7480a0" strokeWidth="1.500" /><path d="M10 17h7l3-3" fill="none" stroke="#4a5c94" strokeWidth="2" /><path d="m5 0 1 3 4 1-3 2 1 4-3-2-4 2 1-4-2-2 4-1z" fill="#f2b233" /></svg>
        </button>
        <Slant left="#e6e7ee" right="#dfe1ec" />
      </div>
      <div className="ml-auto flex w-[783px]">
        <span className="flex w-3 items-center justify-center border border-[#77787e] bg-white"><span className="h-3 w-px bg-[#777]" /></span>
        <button aria-label="向左滚动" className="flex w-6 items-center justify-center bg-[#dcdce1]">
          <svg width="7" height="12" viewBox="0 0 7 12"><path d="M7 0v12L0 6z" fill="#44454b" /></svg>
        </button>
        <div className="flex min-w-0 flex-1 bg-[#dcdce1]">
          <div className="flex flex-1 items-center justify-center gap-0.5 rounded-xs border border-[#8b8c93] bg-linear-to-b from-[#f8f8fa] to-[#dedfe4]">
            <span className="h-2.5 w-px bg-[#777]" /><span className="h-2.5 w-px bg-[#777]" /><span className="h-2.5 w-px bg-[#777]" /><span className="h-2.5 w-px bg-[#777]" />
          </div>
          <div className="w-[46px]" />
        </div>
        <button aria-label="向右滚动" className="flex w-6 items-center justify-center bg-[#dcdce1]">
          <svg width="7" height="12" viewBox="0 0 7 12"><path d="M0 0v12l7-6z" fill="#44454b" /></svg>
        </button>
        <span className="flex w-3 items-center justify-center border border-[#77787e] bg-white"><span className="h-3 w-px bg-[#777]" /></span>
        <span className="w-[25px]" />
      </div>
    </div>
  );
}

function StatusBar() {
  return (
    <footer className="flex h-8 shrink-0 items-center bg-linear-to-b from-[#e9eaee] to-[#bcbdc2] text-[17px] text-[#444]">
      <span className="pl-[11px] pr-[13px]">就绪</span>
      <span className="h-6 w-px bg-[#8f9097]" />
      <span className="ml-auto h-7 w-px bg-[#a0a1a8]" />
      <div className="flex items-center gap-1 pl-1">
        <button aria-label="普通视图" className="flex h-[27px] w-[25px] items-center justify-center rounded-sm border border-[#c29a33] bg-[#fbe97a]">
          <svg width="18" height="16" viewBox="0 0 18 16" fill="#fff" stroke="#555"><path d="M.5.5h17v15H.5zM6 .5v15M12 .5v15M.5 5.500h17M.5 10.500h17" /></svg>
        </button>
        <button aria-label="页面布局视图" className="flex w-5">
          <svg width="20" height="18" viewBox="0 0 20 18"><path d="M1 1h18v16H1z" fill="#8e9097" stroke="#55565c" /><path d="M5 4h10v10H5z" fill="#eee" stroke="#444" /></svg>
        </button>
        <button aria-label="分页预览" className="flex w-6 justify-center">
          <svg width="20" height="18" viewBox="0 0 20 18"><path d="M1 1h18v16H1z" fill="#9c9ea5" stroke="#55565c" /><path d="M2 1h5v9H2zM8 1h5v9H8z" fill="#f4f4f6" stroke="#55565c" /></svg>
        </button>
      </div>
      <button className="w-[72px] pl-1 text-center font-['Noto_Sans',sans-serif] text-[17px]">100%</button>
      <button aria-label="缩小" className="flex"><svg width="24" height="24" viewBox="0 0 24 24"><circle cx="12" cy="12" r="10.500" fill="#f3f3f5" stroke="#77787e" strokeWidth="1.500" /><path d="M6 12h12" stroke="#55565c" strokeWidth="3" /></svg></button>
      <input
        type="range"
        aria-label="缩放"
        defaultValue={50}
        className="h-5 w-[139px] appearance-none bg-transparent [&::-webkit-slider-runnable-track]:h-px [&::-webkit-slider-runnable-track]:bg-[#85868c] [&::-webkit-slider-thumb]:-mt-2 [&::-webkit-slider-thumb]:h-[18px] [&::-webkit-slider-thumb]:w-3 [&::-webkit-slider-thumb]:appearance-none [&::-webkit-slider-thumb]:rounded-t-xs [&::-webkit-slider-thumb]:rounded-b-full [&::-webkit-slider-thumb]:border [&::-webkit-slider-thumb]:border-[#66676d] [&::-webkit-slider-thumb]:bg-[#f6f6f8]"
      />
      <button aria-label="放大" className="mr-0.5 flex"><svg width="24" height="24" viewBox="0 0 24 24"><circle cx="12" cy="12" r="10.500" fill="#f3f3f5" stroke="#77787e" strokeWidth="1.500" /><path d="M6 12h12M12 6v12" stroke="#44454b" strokeWidth="3" /></svg></button>
    </footer>
  );
}

export default function App() {
  return (
    <main className="relative flex h-screen flex-col overflow-hidden bg-white font-['Noto_Sans_CJK_SC',sans-serif]">
      <TitleBar />
      <TabBar />
      <Ribbon />
      <div className="h-1 shrink-0 bg-[#b5b6bc]" />
      <QuickAccess />
      <FormulaBar />
      <div className="h-[5px] shrink-0 bg-[#e3e4ea]" />
      <div className="flex min-h-0 flex-1">
        <Sheet />
        <VScroll />
      </div>
      <SheetTabs />
      <StatusBar />

      <div className="pointer-events-none absolute left-[15px] top-[14px] text-[36px] font-black italic leading-none text-[#22a67e]">会计学堂</div>
      <div className="pointer-events-none absolute left-[1093px] top-[-42px] flex h-[68px] w-[68px] items-end justify-center rounded-full border-3 border-[#8fb59a] bg-[#4fd963] pb-0.5 text-[16px] font-bold text-white shadow-lg">68</div>
    </main>
  );
}
